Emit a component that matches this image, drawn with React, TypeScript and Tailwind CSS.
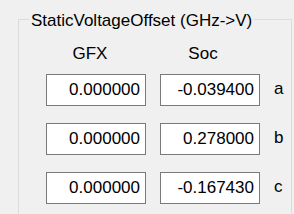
import React from 'react';

const rows = [
  { gfx: '0.000000', soc: '-0.039400', key: 'a' },
  { gfx: '0.000000', soc: '0.278000', key: 'b' },
  { gfx: '0.000000', soc: '-0.167430', key: 'c' },
];

function ValueBox({ value }: { value: string }) {
  return (
    <input
      type="text"
      readOnly
      value={value}
      className="h-[32px] w-[100px] border border-[#7a7a7a] bg-white pr-[5px] text-right text-[17px] leading-[20px] text-black outline-none"
    />
  );
}

export default function App() {
  return (
    <div className="h-screen w-full overflow-hidden bg-[#f0f0f0] font-['Liberation_Sans',Arial,sans-serif] text-[17px] text-black">
      {/* Group box */}
      <fieldset className="ml-[18px] mt-[7px] w-[274px] border border-[#dcdcdc] pb-[30px]">
        <legend className="ml-[10px] px-[2px] pt-[4px] leading-[20px]">StaticVoltageOffset (GHz-&gt;V)</legend>

        <div className="pl-[27px]">
          {/* Column headers */}
          <div className="mt-[13px] grid grid-cols-[100px_100px] gap-x-[14px] leading-[20px]">
            <div className="pr-[12px] text-center">GFX</div>
            <div className="pr-[14px] text-center">Soc</div>
          </div>

          {/* Value rows */}
          <div className="mt-[10px] flex flex-col gap-[17px]">
            {rows.map((row) => (
              <div key={row.key} className="grid grid-cols-[100px_100px_auto] items-center gap-x-[14px]">
                <ValueBox value={row.gfx} />
                <ValueBox value={row.soc} />
                <span className="-mt-[3px] leading-[20px]">{row.key}</span>
              </div>
            ))}
          </div>
        </div>
      </fieldset>
    </div>
  );
}
